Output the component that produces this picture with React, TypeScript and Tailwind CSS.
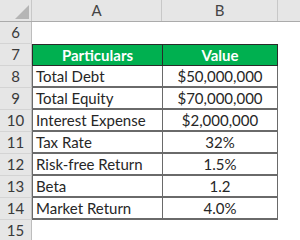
import React from "react";

type Row = { n: number; a?: string; b?: string; head?: boolean };

const rows: Row[] = [
  { n: 6 },
  { n: 7, a: "Particulars", b: "Value", head: true },
  { n: 8, a: "Total Debt", b: "$50,000,000" },
  { n: 9, a: "Total Equity", b: "$70,000,000" },
  { n: 10, a: "Interest Expense", b: "$2,000,000" },
  { n: 11, a: "Tax Rate", b: "32%" },
  { n: 12, a: "Risk-free Return", b: "1.5%" },
  { n: 13, a: "Beta", b: "1.2" },
  { n: 14, a: "Market Return", b: "4.0%" },
  { n: 15 },
];

function RowNum({ n }: { n: number }) {
  return (
    <div className="w-[32px] h-[22px] shrink-0 box-border bg-[#e6e6e6] border-r border-b border-r-[#bdbdbd] border-b-[#d4d4d4] flex items-center justify-center text-[15px] text-[#3a3a3a]">
      {n}
    </div>
  );
}

function DataRow({ row }: { row: Row }) {
  if (!row.a) {
    return (
      <div className="flex">
        <RowNum n={row.n} />
        <div className="flex-1 h-[22px] bg-white" />
      </div>
    );
  }
  if (row.head) {
    return (
      <div className="flex">
        <RowNum n={row.n} />
        <div className="w-[130px] h-[22px] box-border bg-[#00b050] border-l border-t border-b border-[#2a2a2a] flex items-center justify-center font-bold text-white text-[15px]">
          {row.a}
        </div>
        <div className="w-[116px] h-[22px] box-border bg-[#00b050] border border-[#2a2a2a] flex items-center justify-center font-bold text-white text-[15px]">
          {row.b}
        </div>
      </div>
    );
  }
  return (
    <div className="flex">
      <RowNum n={row.n} />
      <div className="w-[130px] h-[22px] box-border border-l border-b-2 border-[#6a6a6a] flex items-center pl-[3px] text-[15px] text-[#262626]">
        {row.a}
      </div>
      <div className="w-[116px] h-[22px] box-border border-l border-r border-b-2 border-[#6a6a6a] flex items-center justify-center text-[15px] text-[#262626]">
        {row.b}
      </div>
    </div>
  );
}

export default function App() {
  return (
    <div className="w-[300px] h-[240px] overflow-hidden bg-white font-['Lato','Liberation_Sans',sans-serif] leading-none">
      <div className="flex h-[22px] bg-[#e6e6e6] border-b border-[#ababab] box-border text-[15px] text-[#444]">
        <div className="w-[32px] shrink-0 border-r border-[#c8c8c8] relative">
          <svg className="absolute left-[15px] top-[5px]" width="14" height="14" viewBox="0 0 14 14">
            <polygon points="14,0 14,14 0,14" fill="#b5b5b5" />
          </svg>
        </div>
        <div className="w-[130px] border-r border-[#c8c8c8] flex items-center justify-center">A</div>
        <div className="w-[116px] border-r border-[#c8c8c8] flex items-center justify-center">B</div>
        <div className="flex-1" />
      </div>
      {rows.map((r) => (
        <DataRow key={r.n} row={r} />
      ))}
    </div>
  );
}
